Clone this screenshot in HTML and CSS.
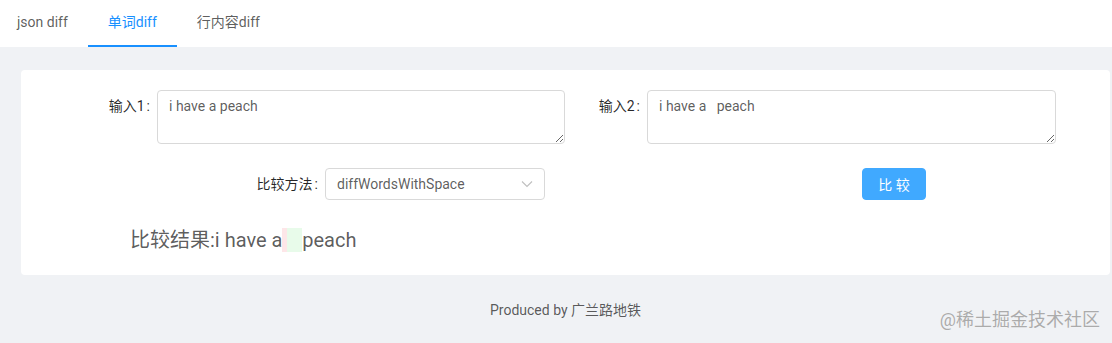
FILE: index.html
```html
<!DOCTYPE html>
<html lang="zh-CN">
<head>
<meta charset="utf-8">
<title>diff</title>
<link rel="stylesheet" href="styles.css">
</head>
<body>
<header class="nav">
  <a class="tab tab-first">json diff</a>
  <a class="tab tab-active">单词diff</a>
  <a class="tab">行内容diff</a>
</header>
<main class="content">
  <section class="card">
    <div class="row row-inputs">
      <div class="item item-1">
        <label class="label">输入1</label>
        <textarea class="textarea">i have a peach</textarea>
      </div>
      <div class="item item-2">
        <label class="label">输入2</label>
        <textarea class="textarea">i have a   peach</textarea>
      </div>
    </div>
    <div class="row row-method">
      <div class="item item-method">
        <label class="label">比较方法</label>
        <div class="select">
          <span class="select-value">diffWordsWithSpace</span>
          <svg class="select-arrow" width="12" height="12" viewBox="0 0 12 12"><path d="M1 3.5 L6 8.5 L11 3.5" fill="none" stroke="#bfbfbf" stroke-width="1.1"/></svg>
        </div>
      </div>
      <button class="btn">比 较</button>
    </div>
    <div class="result">比较结果:i have a<span class="del"> </span><span class="ins">   </span>peach</div>
  </section>
  <footer class="footer">Produced by 广兰路地铁</footer>
</main>
<div class="watermark">@稀土掘金技术社区</div>
</body>
</html>
```
FILE: styles.css
```css
* { box-sizing: border-box; }
html, body {
  margin: 0;
  padding: 0;
}
body {
  width: 1112px;
  height: 343px;
  overflow: hidden;
  position: relative;
  background: #f0f2f5;
  font-family: Roboto, "Noto Sans CJK SC", sans-serif;
  font-size: 14px;
  color: rgba(0, 0, 0, 0.65);
}
.nav {
  display: flex;
  height: 47px;
  background: #fff;
}
.tab {
  display: block;
  padding: 0 20px;
  line-height: 45px;
  border-bottom: 2px solid transparent;
  color: rgba(0, 0, 0, 0.65);
  cursor: pointer;
}
.tab-first { padding-left: 17px; padding-right: 20px; }
.tab-active {
  color: #1890ff;
  border-bottom-color: #1890ff;
}
.content {
  padding: 23px 2px 0 21px;
}
.card {
  background: #fff;
  border-radius: 4px;
  height: 205px;
  padding-top: 20px;
}
.row {
  display: flex;
  align-items: flex-start;
}
.item {
  display: flex;
  align-items: flex-start;
}
.label {
  color: rgba(0, 0, 0, 0.85);
  text-align: right;
  line-height: 32px;
  padding-right: 7px;
}
.label::after {
  content: ":";
  margin: 0 0 0 2px;
}
.item-1 .label { width: 136px; }
.item-2 .label { width: 82px; }
.textarea {
  display: block;
  height: 54px;
  padding: 3px 11px;
  border: 1px solid #d9d9d9;
  border-radius: 4px;
  font-family: inherit;
  font-size: 14px;
  line-height: 24px;
  color: rgba(0, 0, 0, 0.65);
  outline: none;
  margin: 0;
}
.item-1 .textarea { width: 408px; }
.item-2 .textarea { width: 409px; }
.row-method {
  margin-top: 24px;
}
.item-method .label { width: 304px; }
.select {
  width: 220px;
  height: 32px;
  border: 1px solid #d9d9d9;
  border-radius: 4px;
  display: flex;
  align-items: center;
  justify-content: space-between;
  padding: 0 11px;
}
.select-value {
  color: rgba(0, 0, 0, 0.65);
}
.btn {
  margin-left: 317px;
  width: 64px;
  height: 32px;
  border: 1px solid #40a9ff;
  border-radius: 4px;
  background: #40a9ff;
  color: #fff;
  font-family: inherit;
  font-size: 14px;
  padding: 0;
}
.result {
  margin: 27px 0 0 109px;
  font-size: 20px;
  line-height: 27px;
  color: rgba(0, 0, 0, 0.65);
}
.del, .ins { white-space: pre; }
.del { background: #fde6e8; }
.ins { background: #e8fbea; }
.footer {
  text-align: center;
  padding-top: 24px;
  line-height: 22px;
  color: rgba(0, 0, 0, 0.65);
}
.watermark {
  position: absolute;
  right: 12px;
  top: 307px;
  font-size: 18px;
  line-height: 26px;
  color: #ababab;
  text-shadow: 0 0 1px #fff;
}
```
